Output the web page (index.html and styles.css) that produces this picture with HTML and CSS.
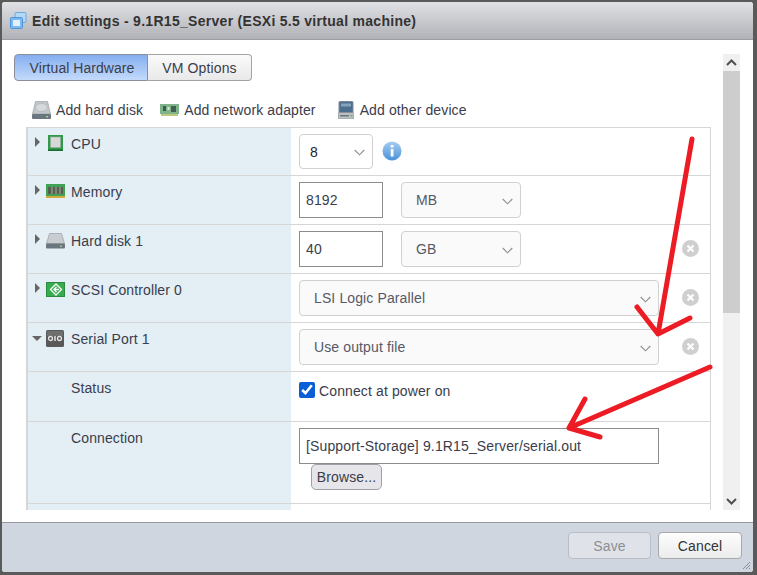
FILE: index.html
```html
<!DOCTYPE html>
<html lang="en">
<head>
<meta charset="utf-8">
<title>Edit settings</title>
<link rel="stylesheet" href="styles.css">
</head>
<body>
<div class="dialog">
  <header class="titlebar">
    <svg class="title-icon" width="19" height="19" viewBox="0 0 19 19"><rect x="6" y="1.5" width="11" height="10" rx="1" fill="#b5d8f5" stroke="#6aa8e0"/><rect x="1.5" y="6.5" width="12" height="11" rx="1" fill="#7db9ee" stroke="#4f94d6"/><rect x="4" y="9" width="7" height="6" fill="#e2f0fb"/></svg>
    <h1 class="title">Edit settings - 9.1R15_Server (ESXi 5.5 virtual machine)</h1>
  </header>
  <div class="body">
    <main class="content">
      <nav class="tabs">
        <span class="tab tab-active">Virtual Hardware</span>
        <span class="tab">VM Options</span>
      </nav>
      <div class="addbar">
        <span class="add add-disk">
          <svg width="19" height="18" viewBox="0 0 19 18"><path d="M3.500 .5h12l3 12.500H.5z" fill="#c4c8cc" stroke="#8e9499" stroke-width=".6"/><ellipse cx="9.500" cy="6.500" rx="6" ry="4" fill="#d6d9dc" stroke="#a7abaf" stroke-width=".6"/><rect y="13" width="19" height="5" rx="1" fill="#6c7680"/><rect x="14" y="15" width="2" height="1.400" fill="#9fdc6a"/></svg>
          Add hard disk
        </span>
        <span class="add add-net">
          <svg width="19" height="12" viewBox="0 0 19 12"><rect width="19" height="10" fill="#7fb48a"/><rect x="3" y="2" width="3" height="5" fill="#3d5a4a"/><rect x="11" y="2" width="5" height="6" fill="#3f5f50"/><rect x="7.500" y="3" width="2" height="3" fill="#d8e6d6"/><path d="M1 10h17v2H1z" fill="#c2c57d"/></svg>
          Add network adapter
        </span>
        <span class="add add-other">
          <svg width="16" height="18" viewBox="0 0 16 18"><rect x="1" y=".5" width="14" height="11" rx="1" fill="#4d6f8f" stroke="#7d8990"/><rect x="3" y="2.500" width="10" height="3" fill="#86a3bd"/><rect y="11.500" width="16" height="6.500" rx="1" fill="#bcc0c4" stroke="#7d8388" stroke-width=".6"/><rect x="2" y="14" width="9" height="1.500" fill="#6c7680"/><rect x="12.500" y="14" width="2" height="1.500" fill="#6fb04a"/></svg>
          Add other device
        </span>
      </div>
      <section class="grid">
        <div class="row row-cpu">
          <div class="label">
            <span class="caret"></span>
            <svg class="row-icon" width="19" height="16" viewBox="0 0 19 16"><rect x="2" y="0" width="15" height="15.500" fill="#2f9a48"/><rect x="4.500" y="2" width="10" height="10.500" fill="#d5d8d4" stroke="#a6aba6" stroke-width=".6"/><path d="M2 14.500h15v1.500H2z" fill="#1c6b30"/></svg>
            <span>CPU</span>
          </div>
          <div class="value">
            <div class="select select-cpu"><span class="select-dark">8</span><svg class="chev" width="11" height="7" viewBox="0 0 11 7"><path d="M.7 1l4.800 4.800L10.300 1" fill="none" stroke="#8f8f8f" stroke-width="1.100"/></svg></div>
            <svg class="info" width="20" height="20" viewBox="0 0 20 20"><defs><linearGradient id="ig" x1="0" y1="0" x2="0" y2="1"><stop offset="0" stop-color="#a8cdf0"/><stop offset="1" stop-color="#4a92d8"/></linearGradient></defs><circle cx="10" cy="10" r="9.500" fill="url(#ig)"/><rect x="8.700" y="8" width="2.800" height="7.500" fill="#fff"/><rect x="8.700" y="4" width="2.800" height="2.600" fill="#fff"/></svg>
          </div>
        </div>
        <div class="row">
          <div class="label">
            <span class="caret"></span>
            <svg class="row-icon" width="19" height="17" viewBox="0 0 19 17"><rect y="1" width="19" height="12" fill="#3fa257"/><rect x="2" y="4" width="15" height="7" fill="#55604f"/><path d="M6 4v7M10 4v7M14 4v7" stroke="#a7b09b"/><rect y="13" width="19" height="2" fill="#d0ac3c"/></svg>
            <span>Memory</span>
          </div>
          <div class="value">
            <input class="input input-num" value="8192" aria-label="Memory">
            <div class="select select-unit"><span>MB</span><svg class="chev" width="11" height="7" viewBox="0 0 11 7"><path d="M.7 1l4.800 4.800L10.300 1" fill="none" stroke="#8f8f8f" stroke-width="1.100"/></svg></div>
          </div>
        </div>
        <div class="row">
          <div class="label">
            <span class="caret"></span>
            <svg class="row-icon" width="19" height="17" viewBox="0 -1 19 17"><path d="M3.500 .5h12l3 10H.5z" fill="#c9cdd2" stroke="#8e9499" stroke-width=".6"/><rect y="10.500" width="19" height="5" rx="1" fill="#6c7680"/><rect x="14" y="12.500" width="2" height="1.200" fill="#9fdc6a"/></svg>
            <span>Hard disk 1</span>
          </div>
          <div class="value">
            <input class="input input-num" value="40" aria-label="Hard disk size">
            <div class="select select-unit"><span>GB</span><svg class="chev" width="11" height="7" viewBox="0 0 11 7"><path d="M.7 1l4.800 4.800L10.300 1" fill="none" stroke="#8f8f8f" stroke-width="1.100"/></svg></div>
            <svg class="remove" width="17" height="17" viewBox="0 0 17 17"><circle cx="8.500" cy="8.500" r="8.500" fill="#cfcfcf"/><path d="M5.500 5.500l6 6M11.500 5.500l-6 6" stroke="#fff" stroke-width="2.200"/></svg>
          </div>
        </div>
        <div class="row">
          <div class="label">
            <span class="caret"></span>
            <svg class="row-icon" width="19" height="17" viewBox="0 -1 19 17"><rect width="19" height="15" fill="#35ad4c"/><rect x=".5" y=".5" width="18" height="14" fill="none" stroke="#2a8a3e"/><path d="M10 2l5.500 5.500L10 13 4.500 7.500z" fill="none" stroke="#fff" stroke-width="1.300"/><path d="M10.500 5l-2.500 2.500 2.500 2.500M8 7.500h5" fill="none" stroke="#fff" stroke-width="1.300"/></svg>
            <span>SCSI Controller 0</span>
          </div>
          <div class="value">
            <div class="select select-wide"><span>LSI Logic Parallel</span><svg class="chev" width="11" height="7" viewBox="0 0 11 7"><path d="M.7 1l4.800 4.800L10.300 1" fill="none" stroke="#8f8f8f" stroke-width="1.100"/></svg></div>
            <svg class="remove" width="17" height="17" viewBox="0 0 17 17"><circle cx="8.500" cy="8.500" r="8.500" fill="#cfcfcf"/><path d="M5.500 5.500l6 6M11.500 5.500l-6 6" stroke="#fff" stroke-width="2.200"/></svg>
          </div>
        </div>
        <div class="row">
          <div class="label">
            <span class="caret caret-open"></span>
            <svg class="row-icon" width="18" height="17" viewBox="0 0 18 17"><rect width="18" height="17" rx="1.500" fill="#595959"/><rect x="1" y="1" width="16" height="5" fill="#6f6f6f"/><circle cx="4.500" cy="8.500" r="2" fill="none" stroke="#e4e4e4" stroke-width="1.300"/><path d="M9 6v5" stroke="#e4e4e4" stroke-width="1.500"/><circle cx="13.500" cy="8.500" r="2" fill="none" stroke="#e4e4e4" stroke-width="1.300"/></svg>
            <span>Serial Port 1</span>
          </div>
          <div class="value">
            <div class="select select-wide"><span>Use output file</span><svg class="chev" width="11" height="7" viewBox="0 0 11 7"><path d="M.7 1l4.800 4.800L10.300 1" fill="none" stroke="#8f8f8f" stroke-width="1.100"/></svg></div>
            <svg class="remove" width="17" height="17" viewBox="0 0 17 17"><circle cx="8.500" cy="8.500" r="8.500" fill="#cfcfcf"/><path d="M5.500 5.500l6 6M11.500 5.500l-6 6" stroke="#fff" stroke-width="2.200"/></svg>
          </div>
        </div>
        <div class="row row-status">
          <div class="label"><span>Status</span></div>
          <div class="value">
            <label class="check"><input type="checkbox" checked><span class="check-text">Connect at power on</span></label>
          </div>
        </div>
        <div class="row row-conn">
          <div class="label"><span>Connection</span></div>
          <div class="value value-stack">
            <input class="input input-path" value="[Support-Storage] 9.1R15_Server/serial.out" aria-label="Connection">
            <button class="browse" type="button">Browse...</button>
          </div>
        </div>
        <div class="row row-tail"><div class="label"></div><div class="value"></div></div>
      </section>
    </main>
    <div class="scrollbar">
      <div class="sb-btn"><svg width="11" height="7" viewBox="0 0 11 7"><path d="M1 6l4.500-4.500L10 6" fill="none" stroke="#505050" stroke-width="2"/></svg></div>
      <div class="sb-thumb"></div>
      <div class="sb-track"></div>
      <div class="sb-btn"><svg width="11" height="7" viewBox="0 0 11 7"><path d="M1 1l4.500 4.500L10 1" fill="none" stroke="#505050" stroke-width="2"/></svg></div>
    </div>
  </div>
  <footer class="footer">
    <button class="btn btn-disabled" type="button">Save</button>
    <button class="btn" type="button">Cancel</button>
    <svg class="grip" width="7" height="7" viewBox="0 0 7 7"><path d="M0 7L7 0M3 7l4-4M6 7l1-1" stroke="#8a8f96"/></svg>
  </footer>
</div>
<svg class="arrows" width="757" height="575" viewBox="0 0 757 575">
  <path d="M692 139L658 334M637 307L658 334L690 318M710 367L569 428M585 399L569 428L600 437" fill="none" stroke="#ed1c24" stroke-width="5" stroke-linecap="round" stroke-linejoin="round"/>
</svg>
</body>
</html>
```
FILE: styles.css
```css
* { box-sizing: border-box; }
html, body { margin: 0; height: 100%; }
body {
  position: relative;
  width: 757px;
  height: 575px;
  overflow: hidden;
  padding: 2px 4px 3px 2px;
  background: #5a5a5a;
  font-family: "Liberation Sans", Arial, sans-serif;
  font-size: 14px;
  letter-spacing: .12px;
  color: #3a3d4b;
}
.dialog {
  display: flex;
  flex-direction: column;
  height: 100%;
  background: #fff;
  border-radius: 3px;
  overflow: hidden;
}
.titlebar {
  flex: none;
  display: flex;
  align-items: center;
  gap: 4px;
  height: 38px;
  padding: 0 0 0 7px;
  background: linear-gradient(#e0e1e5, #b1b2b7);
  border-bottom: 1px solid #9c9da2;
}
.title {
  margin: 0;
  font-size: 14px;
  font-weight: bold;
  letter-spacing: .29px;
  color: #333;
}
.body {
  flex: 1;
  display: flex;
  min-height: 0;
  padding: 14px 0 12px 12px;
}
.content { width: 709px; overflow: hidden; }
.tabs { display: flex; height: 27px; }
.tab {
  display: flex;
  align-items: center;
  justify-content: center;
  width: 104px;
  border: 1px solid #a3a3a3;
  border-left: 0;
  border-radius: 0 4px 4px 0;
  background: linear-gradient(#fafafa, #e9e9e9);
}
.tab-active {
  width: 134px;
  padding-left: 2px;
  letter-spacing: .05px;
  border: 1px solid #8b8f99;
  border-radius: 4px 0 0 4px;
  background: linear-gradient(#85aef0, #c3dafb);
}
.addbar {
  display: flex;
  align-items: center;
  height: 46px;
  padding: 12px 0 0 18px;
  white-space: nowrap;
}
.add { display: flex; align-items: center; gap: 5px; }
.add-net { margin-left: 17px; }
.add-other { margin-left: 22px; gap: 6px; }
.grid {
  margin-left: 12px;
  width: 685px;
  border-top: 1px solid #d6d6d6;
  border-right: 1px solid #d6d6d6;
  border-left: 2px solid #d6d6d6;
}
.row {
  display: grid;
  grid-template-columns: 263px 1fr;
  height: 49px;
  border-bottom: 1px solid #d6d6d6;
}
.row-cpu { height: 48px; }
.row-status { height: 50px; }
.row-conn { height: 82px; }
.row-tail { height: 10px; border-bottom: 0; }
.label {
  position: relative;
  display: flex;
  align-items: flex-start;
  padding: 8px 0 0 43px;
  line-height: 17px;
  background: #e3eef5;
}
.caret {
  position: absolute;
  left: 7px;
  top: 9px;
  border-left: 5px solid #666;
  border-top: 5px solid transparent;
  border-bottom: 5px solid transparent;
}
.caret-open {
  left: 4px;
  top: 13px;
  border-top: 5px solid #666;
  border-left: 5px solid transparent;
  border-right: 5px solid transparent;
  border-bottom: 0;
}
.row-icon { position: absolute; left: 18px; top: 7px; }
.value {
  position: relative;
  display: flex;
  align-items: flex-start;
  padding: 6px 0 0 8px;
}
.value-stack { flex-direction: column; }
.select {
  display: flex;
  align-items: center;
  justify-content: space-between;
  height: 36px;
  padding: 0 7px 0 14px;
  border: 1px solid #d0d0d0;
  border-radius: 4px;
  background: #fafafa;
  color: #565965;
}
.select-cpu {
  width: 74px;
  height: 35px;
  padding-left: 10px;
  background: #fff;
}
.select-dark { color: #222; }
.select-unit { width: 120px; margin-left: 18px; }
.select-wide { width: 360px; }
.chev { flex: none; margin-top: 2px; }
.info { margin: 7px 0 0 9px; }
.input {
  height: 36px;
  padding: 0 6px;
  border: 1px solid #8c8c8c;
  border-radius: 0;
  background: #fff;
  font: inherit;
  letter-spacing: .14px;
  color: #3a3d4b;
  outline: 0;
}
.input-num { width: 84px; }
.input-path { width: 360px; flex: none; }
.remove { position: absolute; left: 391px; top: 15px; }
.check { display: flex; align-items: flex-start; gap: 4px; margin-top: 4px; }
.check-text { margin-top: 1px; }
.check input { width: 16px; height: 16px; margin: 0; accent-color: #0a5fd6; }
.browse {
  margin: 0 0 0 12px;
  width: 71px;
  height: 26px;
  padding: 0;
  border: 1px solid #a0a0ab;
  border-radius: 5px;
  background: #e6e6ea;
  font: inherit;
  letter-spacing: .12px;
  color: #3a3d4b;
}
.scrollbar {
  display: flex;
  flex-direction: column;
  width: 17px;
}
.sb-btn {
  flex: none;
  display: flex;
  align-items: center;
  justify-content: center;
  height: 17px;
  background: #f0f0f0;
}
.sb-thumb { flex: none; height: 242px; background: #cdcdcd; }
.sb-track { flex: 1; background: #f0f0f0; }
.footer {
  position: relative;
  flex: none;
  display: flex;
  justify-content: flex-end;
  gap: 7px;
  height: 50px;
  padding: 9px 11px 0 0;
  background: #d0d6df;
  border-top: 1px solid #98999c;
}
.btn {
  width: 84px;
  height: 27px;
  padding: 0;
  border: 1px solid #a9a9a9;
  border-radius: 4px;
  background: linear-gradient(#fdfdfd, #ececec);
  font: inherit;
  letter-spacing: .12px;
  color: #333;
}
.btn-disabled {
  width: 83px;
  border-color: #b9bec6;
  background: #dfe3e9;
  color: #8b8e94;
}
.grip { position: absolute; right: 3px; bottom: 3px; }
.arrows { position: absolute; left: 0; top: 0; pointer-events: none; }
```
